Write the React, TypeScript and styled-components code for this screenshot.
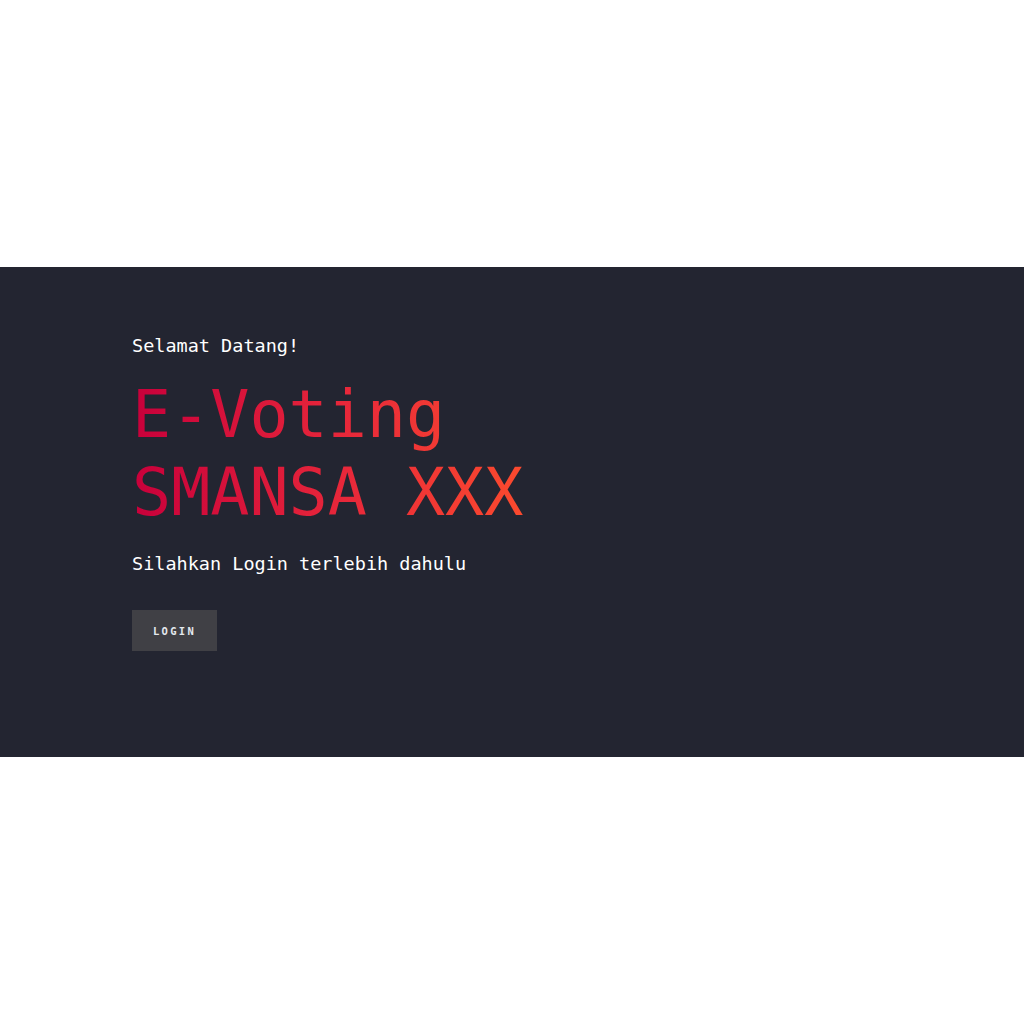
import styled, { createGlobalStyle } from 'styled-components'

const GlobalStyle = createGlobalStyle`
  html, body {
    margin: 0;
    padding: 0;
    background: #ffffff;
  }
  body {
    font-family: 'DejaVu Sans Mono', 'Liberation Mono', monospace;
  }
`

const Page = styled.div`
  min-height: 100vh;
  display: flex;
  align-items: center;
`

const Hero = styled.section`
  width: 100%;
  height: 490px;
  box-sizing: border-box;
  padding-top: 67px;
  background: #232531;
`

const Container = styled.div`
  width: 760px;
  margin: 0 auto;
  display: flex;
  flex-direction: column;
  align-items: flex-start;
`

const Greeting = styled.p`
  margin: 0;
  color: #ffffff;
  font-size: 18.5px;
  line-height: 24px;
`

const Title = styled.h1`
  margin: 18px 0 0;
  font-size: 65px;
  font-weight: 400;
  line-height: 78px;
  background: linear-gradient(to right, #c8003b 0%, #e8283a 55%, #fb4a2e 100%);
  -webkit-background-clip: text;
  background-clip: text;
  color: transparent;
`

const Subtitle = styled.p`
  margin: 20px 0 0;
  color: #ffffff;
  font-size: 18.5px;
  line-height: 24px;
`

const LoginButton = styled.button`
  margin-top: 34px;
  width: 85px;
  height: 41px;
  border: none;
  border-radius: 0;
  background: #404045;
  color: #e4e9ee;
  font-family: 'DejaVu Sans Mono', 'Liberation Mono', monospace;
  font-size: 10.5px;
  font-weight: 700;
  letter-spacing: 2.3px;
  padding: 0;
  cursor: pointer;
`

export default function App() {
  return (
    <>
      <GlobalStyle />
      <Page>
        <Hero>
          <Container>
            <Greeting>Selamat Datang!</Greeting>
            <Title>
              E-Voting
              <br />
              SMANSA XXX
            </Title>
            <Subtitle>Silahkan Login terlebih dahulu</Subtitle>
            <LoginButton>LOGIN</LoginButton>
          </Container>
        </Hero>
      </Page>
    </>
  )
}
